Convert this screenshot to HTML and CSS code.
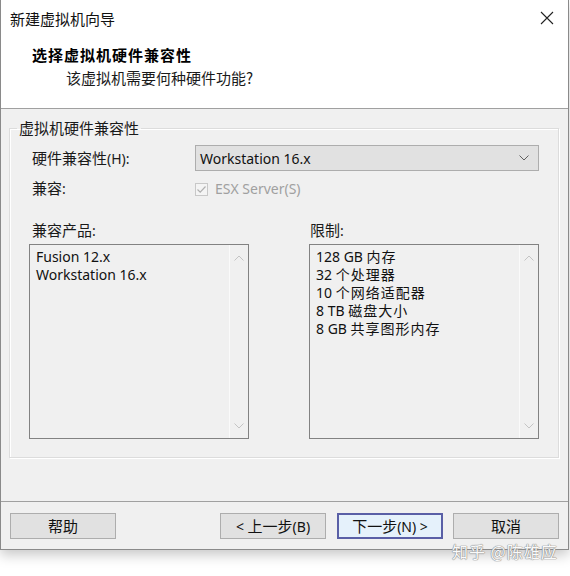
FILE: index.html
```html
<!DOCTYPE html>
<html lang="zh-CN">
<head>
<meta charset="utf-8">
<title>新建虚拟机向导</title>
<link rel="stylesheet" href="styles.css">
</head>
<body>
<div class="dialog">
  <div class="header">
    <div class="titlebar">
      <span class="title">新建虚拟机向导</span>
      <svg class="close" width="14" height="14" viewBox="0 0 14 14"><path d="M1 1 L13 13 M13 1 L1 13" stroke="#222" stroke-width="1.1" fill="none"/></svg>
    </div>
    <div class="heading">选择虚拟机硬件兼容性</div>
    <div class="subtitle">该虚拟机需要何种硬件功能?</div>
  </div>
  <div class="body">
    <fieldset class="group">
      <legend class="legend">虚拟机硬件兼容性</legend>
      <div class="row row-hw">
        <span class="label"><span class="zh">硬件兼容性</span>(H):</span>
        <div class="combo">
          <span class="combo-text">Workstation 16.x</span>
          <svg class="combo-arrow" width="10" height="6" viewBox="0 0 10 6"><path d="M0.5 0.5 L5 5 L9.5 0.5" stroke="#606060" stroke-width="1" fill="none"/></svg>
        </div>
      </div>
      <div class="row row-compat">
        <span class="label"><span class="zh">兼容</span>:</span>
        <span class="check"><svg width="11" height="11" viewBox="0 0 11 11"><path d="M1.5 5.5 L4.2 8.2 L9.5 2.5" stroke="#b0b0b0" stroke-width="1.2" fill="none"/></svg></span>
        <span class="check-label">ESX Server(S)</span>
      </div>
      <div class="lists">
        <div class="col">
          <div class="list-label"><span class="zh">兼容产品</span>:</div>
          <div class="listbox listbox-left">
            <div class="items">
              <div class="item">Fusion 12.x</div>
              <div class="item">Workstation 16.x</div>
            </div>
            <div class="scrollbar">
              <svg width="10" height="6" viewBox="0 0 10 6"><path d="M0.5 5.5 L5 1 L9.5 5.5" stroke="#c4c4c4" stroke-width="1" fill="none"/></svg>
              <svg width="10" height="6" viewBox="0 0 10 6"><path d="M0.5 0.5 L5 5 L9.5 0.5" stroke="#c4c4c4" stroke-width="1" fill="none"/></svg>
            </div>
          </div>
        </div>
        <div class="col col-right">
          <div class="list-label"><span class="zh">限制</span>:</div>
          <div class="listbox listbox-right">
            <div class="items">
              <div class="item">128 GB <span class="zh">内存</span></div>
              <div class="item">32 <span class="zh">个处理器</span></div>
              <div class="item">10 <span class="zh">个网络适配器</span></div>
              <div class="item">8 TB <span class="zh">磁盘大小</span></div>
              <div class="item">8 GB <span class="zh">共享图形内存</span></div>
            </div>
            <div class="scrollbar">
              <svg width="10" height="6" viewBox="0 0 10 6"><path d="M0.5 5.5 L5 1 L9.5 5.5" stroke="#c4c4c4" stroke-width="1" fill="none"/></svg>
              <svg width="10" height="6" viewBox="0 0 10 6"><path d="M0.5 0.5 L5 5 L9.5 0.5" stroke="#c4c4c4" stroke-width="1" fill="none"/></svg>
            </div>
          </div>
        </div>
      </div>
    </fieldset>
  </div>
  <div class="footer">
    <button class="btn"><span class="zh">帮助</span></button>
    <div class="nav">
      <button class="btn">&lt; <span class="zh">上一步</span>(B)</button>
      <button class="btn btn-default"><span class="zh">下一步</span>(N) &gt;</button>
      <button class="btn btn-cancel"><span class="zh">取消</span></button>
    </div>
  </div>
</div>
<div class="watermark">知乎 @陈雄应</div>
</body>
</html>
```

FILE: styles.css
```css
html, body {
  margin: 0;
  padding: 0;
  background: #ffffff;
}

body {
  width: 570px;
  height: 576px;
  position: relative;
  overflow: hidden;
  font-family: "Noto Sans", "Noto Sans CJK SC", sans-serif;
  font-size: 14px;
  color: #1a1a1a;
}

.zh {
  font-family: "Noto Sans CJK SC", sans-serif;
  font-size: 15px;
}

.dialog {
  width: 567px;
  height: 549px;
  border-left: 1px solid #8a8a8a;
  border-right: 1px solid #8a8a8a;
  border-bottom: 1px solid #8a8a8a;
  background: #f0f0f0;
  box-shadow: 0 5px 12px rgba(0, 0, 0, 0.22);
  display: flex;
  flex-direction: column;
}

.header {
  height: 108px;
  background: #ffffff;
  border-bottom: 1px solid #a0a0a0;
  box-sizing: content-box;
}

.titlebar {
  height: 36px;
  display: flex;
  align-items: center;
  justify-content: space-between;
  padding: 0 14px 0 9px;
}

.title {
  font-family: "Noto Sans CJK SC", sans-serif;
  font-size: 15px;
  color: #111;
}

.close {
  display: block;
}

.heading {
  margin-top: 9px;
  padding-left: 31px;
  height: 20px;
  line-height: 20px;
  font-family: "Noto Sans CJK SC", sans-serif;
  font-weight: 700;
  font-size: 15px;
  letter-spacing: 1px;
  color: #000;
}

.subtitle {
  margin-top: 3px;
  padding-left: 65px;
  height: 20px;
  line-height: 20px;
  font-family: "Noto Sans CJK SC", sans-serif;
  font-size: 15px;
  color: #1a1a1a;
}

.body {
  height: 392px;
  padding: 9px 9px 0 8px;
  box-sizing: border-box;
}

.group {
  margin: 0;
  padding: 7px 19px 0 19px;
  height: 340px;
  box-sizing: border-box;
  border: 1px solid #dcdcdc;
  box-shadow: inset 1px 1px 0 #ffffff, 1px 1px 0 #ffffff;
  min-width: 0;
}

.legend {
  padding: 0 2px;
  margin-left: -12px;
  line-height: 20px;
  height: 20px;
  font-family: "Noto Sans CJK SC", sans-serif;
  font-size: 15px;
  color: #1a1a1a;
}

.row {
  display: flex;
  align-items: center;
  padding-left: 3px;
}

.row-hw {
  height: 26px;
}

.row-compat {
  height: 24px;
  margin-top: 5px;
}

.label {
  width: 163px;
  line-height: 20px;
}

.combo {
  width: 344px;
  height: 26px;
  box-sizing: border-box;
  border: 1px solid #adadad;
  background: #e1e1e1;
  display: flex;
  align-items: center;
  justify-content: space-between;
  padding: 0 9px 0 4px;
}

.combo-text {
  color: #111;
}

.combo-arrow {
  display: block;
}

.check {
  width: 13px;
  height: 13px;
  box-sizing: border-box;
  border: 1px solid #c8c8c8;
  background: #f4f4f4;
  display: flex;
  align-items: center;
  justify-content: center;
  margin-top: 2px;
}

.check svg {
  display: block;
}

.check-label {
  margin-left: 7px;
  color: #a0a0a0;
}

.lists {
  display: flex;
  justify-content: space-between;
  margin-top: 20px;
}

.col {
  width: 220px;
}

.col-right {
  width: 230px;
}

.list-label {
  height: 20px;
  line-height: 20px;
  padding-left: 3px;
}

.col-right .list-label {
  padding-left: 1px;
}

.listbox {
  margin-top: 4px;
  height: 195px;
  box-sizing: border-box;
  border: 1px solid #828282;
  background: #f0f0f0;
  display: flex;
}

.items {
  flex: 1;
  padding: 3px 0 0 6px;
}

.item {
  height: 18px;
  line-height: 18px;
  white-space: nowrap;
  color: #111;
}

.item .zh {
  font-family: "Noto Sans", "Noto Sans CJK SC", sans-serif;
  font-size: 14px;
  letter-spacing: 1px;
}

.scrollbar {
  width: 19px;
  border-left: 1px solid #fafafa;
  display: flex;
  flex-direction: column;
  justify-content: space-between;
  align-items: center;
  padding: 10px 0 9px;
  box-sizing: border-box;
}

.scrollbar svg {
  display: block;
}

.footer {
  flex: 1;
  border-top: 1px solid #a0a0a0;
  display: flex;
  justify-content: space-between;
  align-items: flex-start;
  padding: 11px 9px 0 9px;
}

.nav {
  display: flex;
  gap: 10px;
}

.btn {
  width: 106px;
  height: 26px;
  box-sizing: border-box;
  border: 1px solid #adadad;
  background: #e1e1e1;
  font-family: "Noto Sans", "Noto Sans CJK SC", sans-serif;
  font-size: 14px;
  line-height: 20px;
  color: #111;
  padding: 0;
  margin: 0;
}

.btn-default {
  border: 2px solid #5a5fa6;
  background: #e5f1fb;
  margin-left: 1px;
}

.watermark {
  position: absolute;
  left: 452px;
  top: 539px;
  font-family: "Noto Sans CJK SC", sans-serif;
  font-size: 16px;
  letter-spacing: 1px;
  color: #fafafa;
  text-shadow: 0 0 1px #8a8a8a, 0 0 1px #8a8a8a, 0 0 1px #8a8a8a;
}
```
